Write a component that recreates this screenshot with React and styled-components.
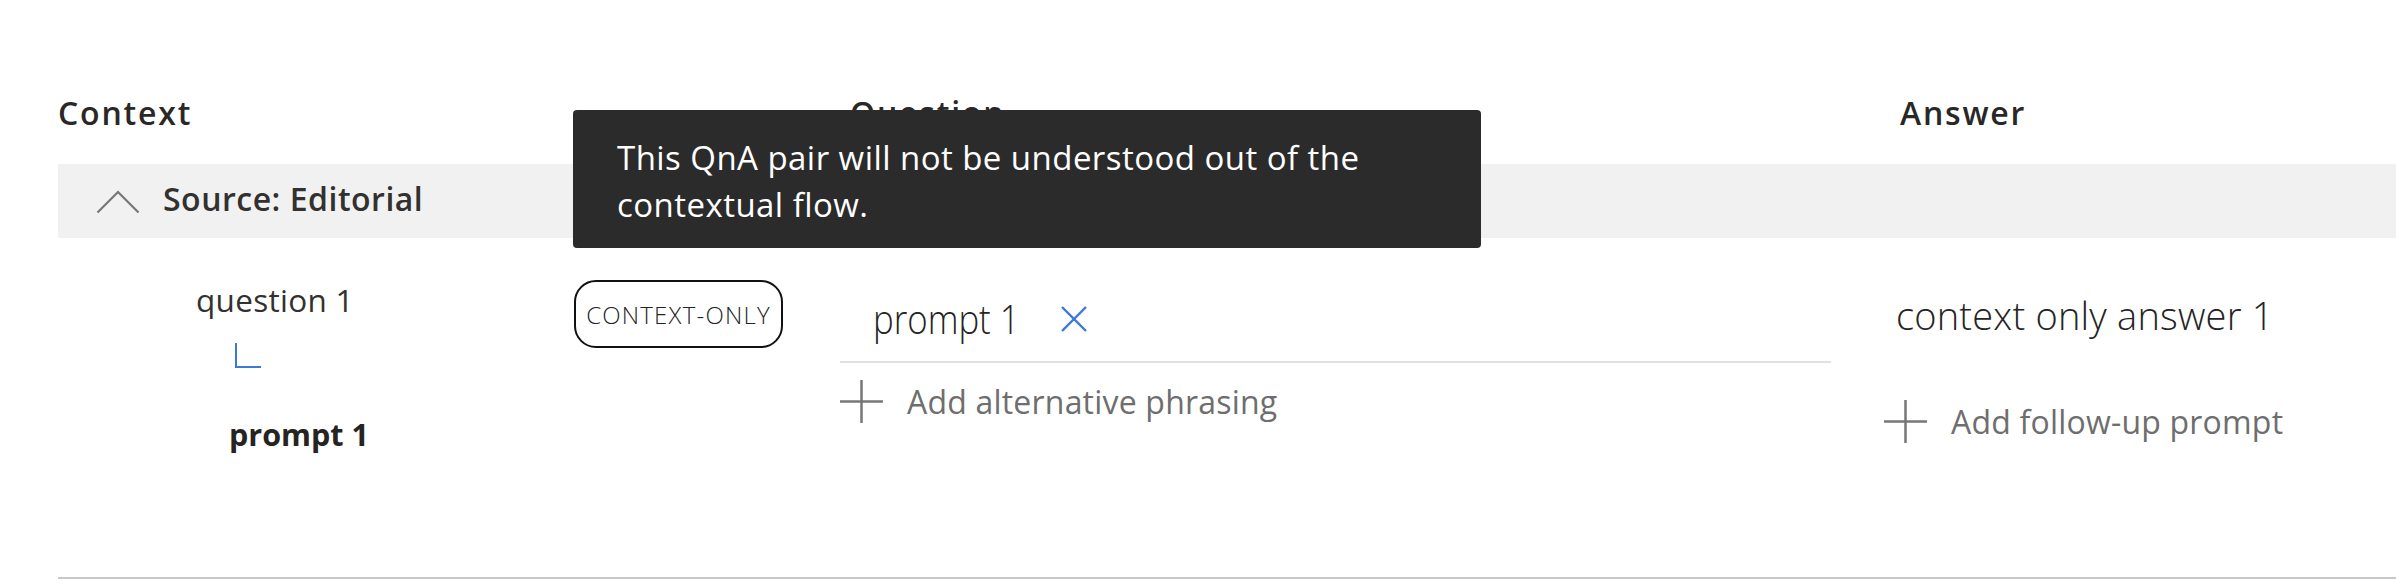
import React from "react";
import styled, { createGlobalStyle } from "styled-components";

const Global = createGlobalStyle`
  html, body { margin: 0; padding: 0; background: #ffffff; overflow: hidden; }
  body { font-family: "Open Sans", "Noto Sans", sans-serif; color: #323130; }
`;

const Page = styled.div`
  padding: 91px 0 0 58px;
  width: 2396px;
  box-sizing: border-box;
`;

const Table = styled.div`
  position: relative;
`;

const Columns = styled.div`
  display: grid;
  grid-template-columns: 782px 991px 1fr;
`;

const HeaderRow = styled(Columns)`
  height: 73px;
  align-items: start;
`;

const HeaderCell = styled.div`
  padding-left: ${(p) => p.$indent || 0}px;
  font-size: 32px;
  line-height: 44px;
  font-weight: 600;
  letter-spacing: 1.8px;
  color: #292827;
`;

const GroupBand = styled.div`
  height: 74px;
  background: #f1f1f1;
  display: flex;
  align-items: center;
  padding-left: 38px;
  gap: 23px;
  box-sizing: border-box;
`;

const GroupTitle = styled.span`
  font-size: 32px;
  line-height: 44px;
  font-weight: 600;
  letter-spacing: 0.5px;
  color: #323130;
  padding-bottom: 4px;
`;

const Row = styled(Columns)`
  min-height: 339px;
  border-bottom: 2px solid #c8c8c8;
  align-items: start;
`;

const ContextCell = styled.div`
  display: grid;
  grid-template-columns: 516px auto;
  align-items: start;
  padding-top: 40px;
`;

const Tree = styled.div`
  display: flex;
  flex-direction: column;
  align-items: flex-start;
  padding-left: 138px;
`;

const TreeQuestion = styled.div`
  font-size: 31.5px;
  line-height: 44px;
  letter-spacing: 0.3px;
  color: #323130;
`;

const Connector = styled.div`
  width: 24px;
  height: 23px;
  margin: 21px 0 0 39px;
  border-left: 2px solid #3e77da;
  border-bottom: 2px solid #3e77da;
`;

const TreePrompt = styled.div`
  font-size: 30.5px;
  line-height: 44px;
  font-weight: 700;
  color: #252423;
  margin: 44px 0 0 33px;
`;

const Pill = styled.div`
  width: 209px;
  height: 68px;
  margin-top: 2px;
  box-sizing: border-box;
  border: 2px solid #111111;
  border-radius: 22px;
  display: flex;
  align-items: center;
  justify-content: center;
  font-size: 24px;
  font-weight: 300;
  letter-spacing: 1.2px;
  color: #252423;
`;

const QuestionCell = styled.div`
  display: flex;
  flex-direction: column;
  padding-top: 54px;
`;

const PhraseRow = styled.div`
  display: flex;
  align-items: center;
  padding: 0 0 15px 33px;
  border-bottom: 2px solid #e1e1e1;
`;

const PhraseBox = styled.div`
  width: 188px;
  height: 54px;
  overflow: visible;
`;

const PhraseText = styled.span`
  display: inline-block;
  font-size: 40px;
  line-height: 54px;
  font-weight: 300;
  color: #252423;
  white-space: nowrap;
  transform: scaleX(0.87);
  transform-origin: left center;
`;

const AddAction = styled.div`
  display: flex;
  align-items: center;
  gap: 24px;
  height: 43px;
  margin-top: ${(p) => p.$top || 0}px;
  font-size: 32px;
  line-height: 44px;
  letter-spacing: 0.2px;
  color: #6e6e6e;
  white-space: nowrap;
`;

const AnswerCell = styled.div`
  display: flex;
  flex-direction: column;
  padding: 51px 0 0 53px;
`;

const AnswerText = styled.div`
  padding-left: 12px;
  font-size: 38px;
  line-height: 52px;
  font-weight: 300;
  letter-spacing: 0.2px;
  color: #252423;
  white-space: nowrap;
`;

const Tooltip = styled.div`
  position: absolute;
  left: 515px;
  top: 19px;
  width: 908px;
  box-sizing: border-box;
  padding: 24px 44px 20px 44px;
  background: #2b2b2b;
  border-radius: 4px;
  color: #ffffff;
  font-size: 33px;
  line-height: 47px;
  font-weight: 400;
  letter-spacing: 0.45px;
`;

const Chevron = () => (
  <svg width="44" height="25" viewBox="0 0 44 25" fill="none">
    <polyline points="1.5,23.5 22,3 42.5,23.5" stroke="#777777" strokeWidth="2.2" />
  </svg>
);

const Plus = () => (
  <svg width="43" height="43" viewBox="0 0 43 43" fill="none">
    <line x1="0" y1="21.5" x2="43" y2="21.5" stroke="#777777" strokeWidth="2.5" />
    <line x1="21.5" y1="0" x2="21.5" y2="43" stroke="#777777" strokeWidth="2.5" />
  </svg>
);

const Close = () => (
  <svg width="26" height="26" viewBox="0 0 26 26" fill="none">
    <line x1="1" y1="1" x2="25" y2="25" stroke="#3e77da" strokeWidth="2.4" />
    <line x1="25" y1="1" x2="1" y2="25" stroke="#3e77da" strokeWidth="2.4" />
  </svg>
);

export default function App() {
  return (
    <>
      <Global />
      <Page>
        <Table>
          <HeaderRow>
            <HeaderCell>Context</HeaderCell>
            <HeaderCell $indent={10}>Question</HeaderCell>
            <HeaderCell $indent={69}>Answer</HeaderCell>
          </HeaderRow>
          <GroupBand>
            <Chevron />
            <GroupTitle>Source: Editorial</GroupTitle>
          </GroupBand>
          <Row>
            <ContextCell>
              <Tree>
                <TreeQuestion>question 1</TreeQuestion>
                <Connector />
                <TreePrompt>prompt 1</TreePrompt>
              </Tree>
              <Pill>CONTEXT-ONLY</Pill>
            </ContextCell>
            <QuestionCell>
              <PhraseRow>
                <PhraseBox>
                  <PhraseText>prompt 1</PhraseText>
                </PhraseBox>
                <Close />
              </PhraseRow>
              <AddAction $top={17}>
                <Plus />
                <span>Add alternative phrasing</span>
              </AddAction>
            </QuestionCell>
            <AnswerCell>
              <AnswerText>context only answer 1</AnswerText>
              <AddAction $top={59}>
                <Plus />
                <span>Add follow-up prompt</span>
              </AddAction>
            </AnswerCell>
          </Row>
          <Tooltip>
            This QnA pair will not be understood out of the contextual flow.
          </Tooltip>
        </Table>
      </Page>
    </>
  );
}
